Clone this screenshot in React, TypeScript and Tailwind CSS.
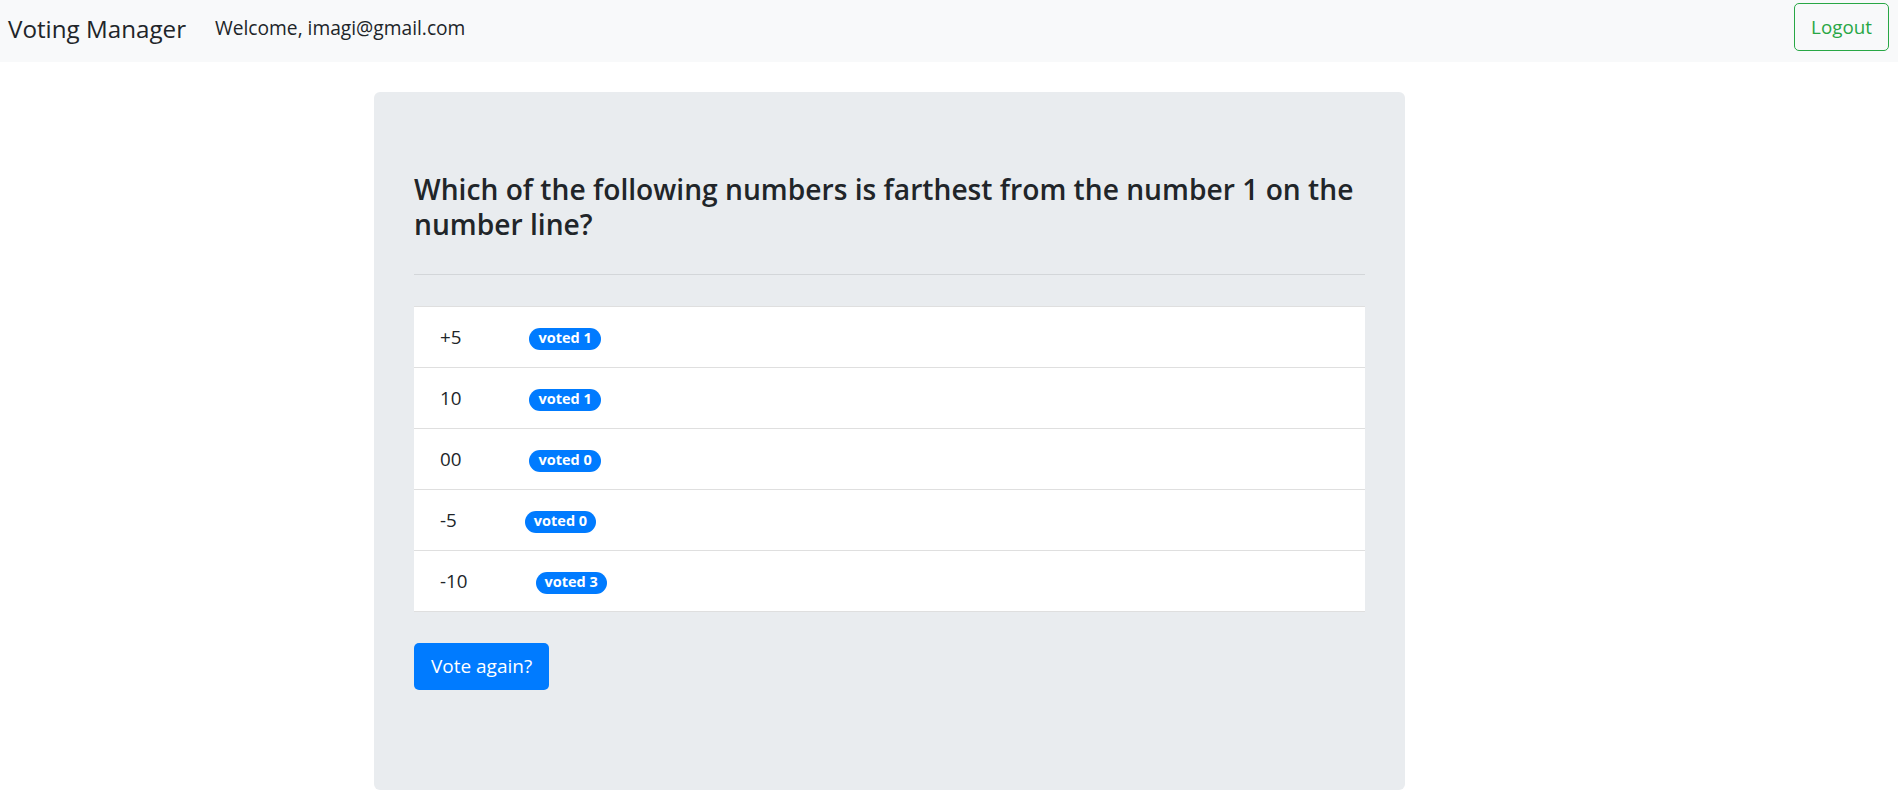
const options = [
  { label: "+5", votes: 1 },
  { label: "10", votes: 1 },
  { label: "00", votes: 0 },
  { label: "-5", votes: 0 },
  { label: "-10", votes: 3 },
];

const Navbar = () => (
  <nav className="h-[62px] bg-[#f8f9fa] flex items-start justify-between">
    <div className="flex items-center h-[58px]">
      <span className="pl-[8px] text-[24.2px] leading-[30px] text-[#212529]">Voting Manager</span>
      <span className="ml-[29px] text-[19.2px] leading-[28px] text-[#212529] -mt-[3px]">Welcome, imagi@gmail.com</span>
    </div>
    <button className="mt-[3px] mr-[9px] w-[95px] h-[48px] rounded-[5px] border border-[#28a745] text-[#28a745] text-[18.8px] leading-none">
      Logout
    </button>
  </nav>
);

export default function App() {
  return (
    <div className="min-h-[811px] bg-white text-[#212529]" style={{ fontFamily: '"Open Sans", "Noto Sans", sans-serif' }}>
      <Navbar />
      <div className="ml-[374px] mt-[30px] w-[1031px] h-[698px] rounded-[6px] bg-[#e9ecef] px-[40px] pt-[80px]">
        <h4 className="text-[28.2px] leading-[35px] font-semibold text-[#212529]">
          Which of the following numbers is farthest from the number 1 on the number line?
        </h4>
        <hr className="mt-[32px] border-0 border-t border-[#d3d6d9]" />
        <ul className="mt-[31px] bg-white border-t border-[#dfdfdf]">
          {options.map((o) => (
            <li key={o.label} className="h-[61px] flex items-center pl-[26px] border-b border-[#dfdfdf] text-[18.8px]">
              <span>{o.label}</span>
              <span className="ml-[68px] mt-[3px] h-[22px] px-[9px] rounded-full bg-[#007bff] text-white text-[14.5px] font-bold flex items-center leading-none">
                voted {o.votes}
              </span>
            </li>
          ))}
        </ul>
        <button className="mt-[31px] w-[135px] h-[47px] rounded-[5px] bg-[#007bff] text-white text-[19px] leading-none">
          Vote again?
        </button>
      </div>
    </div>
  );
}
